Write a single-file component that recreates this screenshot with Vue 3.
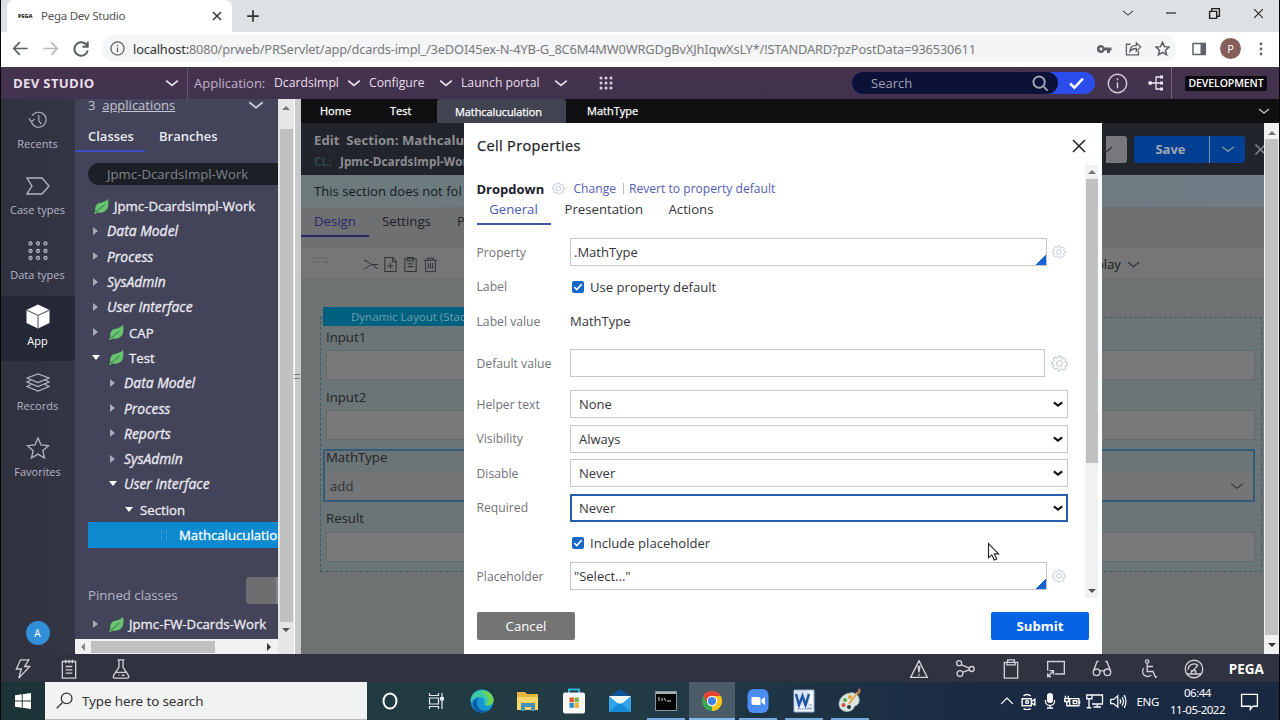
<template>
  <div class="screen">
    <header class="tabstrip">
      <div class="browser-tab">
        <span class="favicon">PEGA</span>
        <span class="tab-title">Pega Dev Studio</span>
        <Icon name="close" :size="12" :sw="3" />
      </div>
      <Icon class="new-tab" name="plus" :size="14" :sw="3" />
      <div class="window-buttons">
        <Icon name="chevron" :size="12" :sw="2" />
        <Icon name="minus" :size="12" :sw="2.4" />
        <Icon name="restore" :size="13" :sw="2.6" />
        <Icon name="close" :size="13" :sw="2" />
      </div>
    </header>

    <div class="address-row">
      <Icon name="back" :size="17" :sw="2.4" />
      <Icon class="faded" name="forward" :size="17" :sw="2.2" />
      <Icon name="reload" :size="18" :sw="2.6" />
      <div class="omnibox">
        <Icon name="info" :size="15" :sw="2" />
        <span class="url"><b>localhost:</b>8080/prweb/PRServlet/app/dcards-impl_/3eDOI45ex-N-4YB-G_8C6M4MW0WRGDgBvXJhIqwXsLY*/!STANDARD?pzPostData=936530611</span>
        <svg class="key" width="15" height="10" viewBox="0 0 15 10"><path d="M4 1a4 4 0 1 0 3.500 5.400H10V9h3V6.400h1.500V3.500H7.500A4 4 0 0 0 4 1Zm0 2.600a1.400 1.400 0 1 1 0 2.800 1.400 1.400 0 0 1 0-2.800Z" fill="#5f6368" fill-rule="evenodd" /></svg>
        <Icon name="share" :size="17" :sw="1.8" />
        <Icon name="star" :size="15" :sw="2.4" />
      </div>
      <svg class="side-panel" width="14" height="14" viewBox="0 0 14 14"><path d="M1 1.500h12v11H1Z" fill="none" stroke="#5f6368" stroke-width="1.500" /><path d="M8.500 1H14v12H8.500Z" fill="#5f6368" /></svg>
      <span class="profile">P</span>
      <svg width="4" height="14" viewBox="0 0 4 14" fill="#5f6368"><circle cx="2" cy="2" r="1.400" /><circle cx="2" cy="7" r="1.400" /><circle cx="2" cy="12" r="1.400" /></svg>
    </div>

    <nav class="devbar">
      <div class="studio"><span>DEV STUDIO</span><Icon name="chevron" :size="14" :sw="3" /></div>
      <span class="app-label">Application:</span>
      <div class="dev-menu m1"><span>DcardsImpl</span><Icon name="chevron" :size="14" :sw="3" /></div>
      <div class="dev-menu m2"><span>Configure</span><Icon name="chevron" :size="14" :sw="3" /></div>
      <div class="dev-menu m3"><span>Launch portal</span><Icon name="chevron" :size="14" :sw="3" /></div>
      <svg class="launcher" width="14" height="14" viewBox="0 0 14 14" fill="#d9d0dd"><circle v-for="n in 9" :key="n" :cx="2 + ((n - 1) % 3) * 5" :cy="2 + Math.floor((n - 1) / 3) * 5" r="1.500" /></svg>
      <div class="search-pill">
        <div class="search-box"><span>Search</span><Icon name="search" :size="17" :sw="2.8" /></div>
        <Icon name="check" :size="17" :sw="3.6" />
      </div>
      <Icon class="dev-info" name="info" :size="21" :sw="1.6" />
      <svg class="tree-icon" width="16" height="16" viewBox="0 0 16 16" fill="none" stroke="#eee6f0" stroke-width="1.300"><path d="M2 8h12M14 2H8v12h6" /><g fill="#eee6f0" stroke="none"><path d="M12 .5h3v3h-3zM12 6.500h3v3h-3zM12 12.500h3v3h-3z" /><circle cx="2.200" cy="8" r="2" /></g></svg>
      <div class="env"><span>DEVELOPMENT</span></div>
    </nav>

    <div class="workspace">
      <aside class="rail">
        <div v-for="r in rail" :key="r.label" class="rail-item" :class="{ active: r.label === 'App' }">
          <div class="rail-icon">
            <svg v-if="r.label === 'App'" width="24" height="25" viewBox="0 0 24 25"><path d="M12 .5 23.500 6v13L12 24.500.5 19V6Z" fill="#fff" /><path d="M1 6.300l11 5.200 11-5.200M12 11.500V24" fill="none" stroke="#5a5c6c" stroke-width="1.100" /></svg>
            <Icon v-else :name="r.icon" :size="24" :sw="1.3" />
          </div>
          <span>{{ r.label }}</span>
        </div>
        <span class="avatar">A</span>
      </aside>

      <section class="explorer">
        <div class="explorer-body">
          <div class="apps-line"><span>3&nbsp; <u>applications</u></span><Icon name="chevron" :size="16" :sw="3" /></div>
          <div class="explorer-tabs"><span class="on">Classes</span><span>Branches</span></div>
          <div class="class-filter">Jpmc-DcardsImpl-Work</div>
          <div class="tree">
            <div v-for="(n, i) in tree" :key="i" class="node" :class="[n.kind, 'l' + n.level]">
              <span v-if="n.arrow" class="arrow" :class="n.arrow"></span>
              <Leaf v-if="n.leaf" />
              <span v-if="n.kind === 'selected'" class="grip"></span>
              <span class="node-text">{{ n.text }}</span>
            </div>
          </div>
          <div class="pinned"><span>Pinned classes</span><i class="pin-button"></i></div>
          <div class="node plain l1 pinned-node"><span class="arrow right"></span><Leaf /><span class="node-text">Jpmc-FW-Dcards-Work</span></div>
        </div>
        <div class="hscroll"><i class="tri left"></i><i class="hthumb"></i><i class="tri rightward"></i></div>
      </section>
      <div class="vscroll explorer-scroll"><i class="tri up"></i><i class="thumb"></i><i class="tri down"></i></div>
      <div class="splitter"><i></i></div>

      <main class="editor">
        <div class="doc-tabs">
          <span class="t-home">Home</span><span class="t-test">Test</span><span class="t-math on">Mathcaluculation</span><span class="t-type">MathType</span>
          <Icon name="chevron" :size="12" :sw="2.8" />
        </div>
        <div class="editor-row">
          <div class="editor-main">
            <div class="rule-header">
              <div class="rule-title"><div class="rt1">Edit&nbsp; Section: Mathcalu</div><div class="rt2"><em>CL:</em><span>Jpmc-DcardsImpl-Wor</span></div></div>
              <span class="grey-button"><Icon name="chevron" :size="13" :sw="2.4" /></span>
              <span class="save">Save</span>
              <span class="save-more"><Icon name="chevron" :size="14" :sw="2.2" /></span>
              <Icon class="rule-close" name="close" :size="15" :sw="2.4" />
            </div>
            <div class="notice">This section does not fol</div>
            <div class="rule-tabs"><span class="on">Design</span><span class="rt-settings">Settings</span><span>P</span></div>
            <div class="toolbar">
              <Icon class="dim" name="lines" :size="18" :sw="1.2" />
              <Icon class="tb-cut" name="cut" :size="15" :sw="1.6" />
              <Icon name="newdoc" :size="17" :sw="1.5" />
              <Icon name="paste" :size="17" :sw="1.5" />
              <Icon name="trash" :size="17" :sw="1.4" />
              <span class="display">Display</span>
              <Icon name="chevron" :size="13" :sw="2.4" />
            </div>
            <div class="canvas">
              <div class="layout-box">
                <div class="layout-title">Dynamic Layout (Stac</div>
                <div v-for="f in fields" :key="f.label" class="field" :class="{ chosen: f.value }">
                  <div class="field-label">{{ f.label }}</div>
                  <div class="field-box"><span>{{ f.value }}</span><Icon v-if="f.value" name="chevron" :size="14" :sw="2" /></div>
                </div>
              </div>
            </div>
          </div>
          <div class="vscroll editor-scroll"><i class="tri up"></i><i class="thumb"></i><i class="tri down"></i></div>
        </div>
      </main>

      <div class="modal">
        <div class="modal-head"><span>Cell Properties</span><Icon name="close" :size="18" :sw="2" /></div>
        <div class="modal-mid">
          <div class="modal-body">
            <div class="control-line"><b>Dropdown</b><Gear :size="13" /><a class="change">Change</a><i></i><a>Revert to property default</a></div>
            <div class="modal-tabs"><span class="on">General</span><span class="mt-pres">Presentation</span><span>Actions</span></div>
            <div class="form">
              <div v-for="f in form" :key="f.id" class="form-row" :class="f.id">
                <label>{{ f.label }}</label>
                <div v-if="f.type === 'input'" class="control" :class="{ smart: f.smart }">{{ f.value }}</div>
                <div v-else-if="f.type === 'select'" class="control select" :class="{ focused: f.id === 'required' }"><span>{{ f.value }}</span><Icon name="chevron" :size="10" :sw="5" /></div>
                <div v-else-if="f.type === 'check'" class="check"><span class="tick"><Icon name="check" :size="10" :sw="4" /></span>{{ f.value }}</div>
                <div v-else class="plain-value">{{ f.value }}</div>
                <Gear v-if="f.gear" :size="f.gear" />
              </div>
            </div>
          </div>
          <div class="vscroll modal-scroll"><i class="tri up"></i><i class="thumb"></i><i class="tri down"></i></div>
        </div>
        <div class="modal-foot"><span class="btn cancel">Cancel</span><span class="btn submit">Submit</span></div>
      </div>
      <svg class="cursor" width="13" height="20" viewBox="0 0 13 20"><path d="M1.500 1.500v14.300l3.300-3 2.400 5.300 2.500-1.200-2.400-5h4.300Z" fill="#fff" stroke="#222" stroke-width="1.100" /></svg>
    </div>

    <footer class="pega-bar">
      <Icon v-for="t in tools" :key="t" :class="'p-' + t" :name="t" :size="20" :sw="1.6" />
      <strong>PEGA</strong>
    </footer>

    <div class="taskbar">
      <div class="start"><svg width="16" height="16" viewBox="0 0 16 16" fill="#fff"><path d="M0 2.300 6.800 1.300V7.500H0ZM7.700 1.200 16 0v7.500H7.700ZM0 8.500h6.800v6.200L0 13.700ZM7.700 8.500H16V16l-8.300-1.200Z" /></svg></div>
      <div class="win-search"><Icon name="lens" :size="17" :sw="1.8" /><span>Type here to search</span></div>
      <div class="task"><svg width="16" height="18" viewBox="0 0 16 18"><ellipse cx="8" cy="9" rx="6.500" ry="7.500" fill="none" stroke="#fff" stroke-width="2" /></svg></div>
      <div class="task"><svg width="18" height="18" viewBox="0 0 18 18" fill="none" stroke="#e6ecee" stroke-width="1.200"><path d="M2.500 1v2.500h9V1M2.500 17v-2.500h9V17M2.500 6h9v6h-9ZM15 1v4M15 8v9" /><path d="M13.700 5.500h2.600v2.400h-2.600Z" fill="#e6ecee" /></svg></div>
      <div class="task"><svg width="24" height="26" viewBox="0 0 24 26"><circle cx="12" cy="13" r="11.500" fill="#1597d5" /><path d="M2 8C6 0 20-1 23.500 11c.4 5-3 6.500-6.500 6.500-2 0-3.500-1-2.500-2.500C16 12 13 9 10 9 6 9 3 11 .6 14 .5 12 1 10 2 8Z" fill="#3fc9a4" /><path d="M7 13c-1 6 4 12 12 9-5 4-14 3-16-4C2 13 5 10 10 9c-2 1-3 2-3 4Z" fill="#0b5ca8" /><path d="M12 4c7-2 12 4 11.500 9-1 5-5 4.500-7.500 4.300 4-3 4-9-4-13.300Z" fill="#74d34d" /></svg></div>
      <div class="task"><svg width="22" height="22" viewBox="0 0 22 22"><path d="M0 2h8l2 2h11v15H0Z" fill="#eab63c" /><path d="M0 7h21v13H0Z" fill="#fbd769" /><path d="M4 13h14v8h-4v-4H8v4H4Z" fill="#4690b5" /></svg></div>
      <div class="task"><svg width="22" height="26" viewBox="0 0 22 26"><path d="M6 5V1.500h10V5" fill="none" stroke="#35b2dc" stroke-width="2" /><rect y="4.500" width="22" height="21" rx="2" fill="#f7f7f7" /><path d="M6.500 9.500h4.300v4.800H6.500Z" fill="#dc5232" /><path d="M11.500 9.500h4.300v4.800h-4.300Z" fill="#78b340" /><path d="M6.500 15h4.300v4.800H6.500Z" fill="#2691c8" /><path d="M11.500 15h4.300v4.800h-4.300Z" fill="#f0ad27" /></svg></div>
      <div class="task"><svg width="24" height="24" viewBox="0 0 24 24"><path d="M1 8 12 0l11 8v8H1Z" fill="#0c5498" /><path d="M1 7.500h22V23H1Z" fill="#32a4ea" /><path d="M1 7h22l-11 9Z" fill="#fff" /><path d="M1 23 12 13l11 10Z" fill="#168bd7" /><path d="M3 7h18l-9 8Z" fill="#eef7fd" /></svg></div>
      <div class="task open"><svg width="22" height="20" viewBox="0 0 22 20"><path d="M.5.5h21v19H.5Z" fill="#050505" stroke="#89959a" /><path d="M1 1h20v2H1Z" fill="#aab2b5" /><path d="M3 7h2M3 9h2M7 7v3M9 7l2 3M12 10h4" stroke="#ddd" /></svg></div>
      <div class="task open current"><svg width="22" height="22" viewBox="0 0 22 22"><circle cx="11" cy="11" r="10" fill="#35a853" /><path d="M11 11 2.300 6A10 10 0 0 1 19.700 6Z" fill="#e94335" /><path d="M11 11V6h8.700A10 10 0 0 1 11 21Z" fill="#fbc116" /><path d="m2.300 6 4.400 7.500L11 11Z" fill="#e94335" /><circle cx="11" cy="11" r="5.200" fill="#fff" /><circle cx="11" cy="11" r="4" fill="#3f7fe8" /></svg></div>
      <div class="task open"><svg width="22" height="24" viewBox="0 0 22 24"><rect x=".5" width="21" height="24" rx="6" fill="#4b8cf5" /><path d="M4.500 8h7q2 0 2 2v6h-7q-2 0-2-2ZM14.500 10.500 18 8v8l-3.500-2.500Z" fill="#fff" /></svg></div>
      <div class="task open"><svg width="22" height="24" viewBox="0 0 22 24"><path d="M1 1h20v22H1Z" fill="#f7faff" stroke="#91a9d0" /><path d="M14 16h5M14 19h5M4 20h15" stroke="#7a9acc" /><path d="M1 2h15v15H1Z" fill="#d7e5f8" /><path d="m3 5 3 11 3.500-9 3 9L16 5" fill="none" stroke="#2556a5" stroke-width="2.500" /></svg></div>
      <div class="task open"><svg width="24" height="26" viewBox="0 0 24 26"><path d="M12 5c6-1 10 3 9 9-1 4-4 3-5 5-1 4-6 5-10 4-5-2-6-7-4-11 2-4 5-6 10-7Z" fill="#dce7e4" stroke="#a5b6b3" /><circle cx="7" cy="12" r="2" fill="#5aab45" /><circle cx="12" cy="9" r="2" fill="#e79c35" /><circle cx="5.500" cy="17" r="2" fill="#d44a3c" /><circle cx="11" cy="19" r="2" fill="#263b42" /><path d="m11 16 9-12" stroke="#e2a44d" stroke-width="2" /><path d="m19 5 2-5 2 2-2 5Z" fill="#b47850" /></svg></div>
      <div class="tray">
        <Icon name="caretup" :size="14" :sw="2.2" />
        <Icon name="meet" :size="17" :sw="2" />
        <svg class="mic" width="12" height="16" viewBox="0 0 12 16"><rect x="3" y="0" width="6" height="10" rx="3" fill="#fff" /><path d="M1.500 7v1.500a4.500 4 0 0 0 9 0V7M6 12.500V15M3 15h6" fill="none" stroke="#fff" stroke-width="1.300" /></svg>
        <Icon name="battery" :size="17" :sw="1.9" />
        <Icon name="network" :size="18" :sw="1.7" />
        <Icon name="speaker" :size="17" :sw="1.8" />
        <span class="lang">ENG</span>
        <div class="clock"><div>06:44</div><div>11-05-2022</div></div>
        <Icon name="note" :size="19" :sw="1.7" />
      </div>
    </div>
  </div>
</template>

<script setup>
import { h } from 'vue'

const paths = {
  close: 'M4 4 20 20M20 4 4 20',
  plus: 'M12 2v20M2 12h20',
  minus: 'M2 12h20',
  chevron: 'M2 8l10 8L22 8',
  caretup: 'M2 17 12 7l10 10',
  restore: 'M3 8h13v13H3ZM7 8V3h14v14h-5',
  back: 'M22 12H3M11 3 2.500 12l8.500 9',
  forward: 'M2 12h19M13 3l8.500 9-8.500 9',
  reload: 'M20 7.500A9 9 0 1 0 21 14M21 2v7h-7',
  info: 'M12 1.500a10.500 10.500 0 1 0 0 21 10.500 10.500 0 0 0 0-21ZM12 10.500v7M12 6v2.200',
  share: 'M8 6H2v15h17v-5M7 16c0-6 4-8.500 9-8.500V4l6 6-6 6v-4c-4 0-7 1-9 4Z',
  star: 'M12 2l3 7 7.500.7-5.700 5 1.700 7.300-6.500-3.900L5.500 22l1.700-7.300-5.700-5L9 9Z',
  search: 'M10 2a8 8 0 1 0 0 16 8 8 0 0 0 0-16ZM16 16l6 6',
  lens: 'M15 1.500a7.500 7.500 0 1 0 0 15 7.500 7.500 0 0 0 0-15ZM9.500 14.500 1 23',
  check: 'M3 12l6 6L21 5',
  recent: 'M4 14a9 9 0 1 0 1-7M1 10l3 4 4-3M13 6v7l3 4',
  casetype: 'M1 4h15l7 8-7 8H1l5-8Z',
  data: 'M3 4.500a1.500 1.500 0 1 0 3 0 1.500 1.500 0 1 0-3 0M10.500 4.500a1.500 1.500 0 1 0 3 0 1.500 1.500 0 1 0-3 0M18 4.500a1.500 1.500 0 1 0 3 0 1.500 1.500 0 1 0-3 0M3 12a1.500 1.500 0 1 0 3 0 1.500 1.500 0 1 0-3 0M10.500 12a1.500 1.500 0 1 0 3 0 1.500 1.500 0 1 0-3 0M18 12a1.500 1.500 0 1 0 3 0 1.500 1.500 0 1 0-3 0M3 19a1.500 1.500 0 1 0 3 0 1.500 1.500 0 1 0-3 0M10.500 19a1.500 1.500 0 1 0 3 0 1.500 1.500 0 1 0-3 0M18 19a1.500 1.500 0 1 0 3 0 1.500 1.500 0 1 0-3 0',
  records: 'M1 8l11-4 11 4-11 4.500ZM5 10l-4 2 11 4.500L23 12l-4-2M5 14.500 1 16.500 12 21l11-4.500-4-2',
  lines: 'M1 4h20M1 9h9M13 9h8v4',
  cut: 'M1 5l17 10M1 19 12 12H23M18 15a2 2 0 1 0 4 2M1 5l3 3',
  newdoc: 'M4 2h11l5 5v15H4ZM15 2v6h5M12 10v8M8 14h8',
  paste: 'M4 4h16v18H4ZM8 2h8v5H8ZM8 11h8M8 15h8',
  trash: 'M3 6h18M8 6V3h8v3M5 6v16h14V6M9 10v8M12 10v8M15 10v8',
  bolt: 'M9 1h10l-5 8h6L7 23l3-11H4Z',
  notepad: 'M4 3h16v20H4ZM8 1v4M12 1v4M16 1v4M8 9h8M8 13h8M8 17h8',
  flask: 'M8 1h8M9.500 1v9L3 20q-1 3 2 3h14q3 0 2-3l-6.500-10V1M6 16h12M9 19h1M13 19.500h3',
  warning: 'M12 2 2 22h20ZM12 9v7M12 18v2M11 9h2l-1 7Z',
  nodes: 'M5 2a3 3 0 1 0 0 6 3 3 0 0 0 0-6ZM20 9a3 3 0 1 0 0 6 3 3 0 0 0 0-6ZM6 14a3.500 3.500 0 1 0 0 7 3.500 3.500 0 0 0 0-7ZM8 7l9 4M9 16l8-3',
  clipboard: 'M4 4h16v19H4ZM8 4V1h8v3h1v3H7V4Z',
  cast: 'M2 14V3h20v15H11M2 21l7-7M9 19v-5H4M2 17v4h4',
  glasses: 'M5.500 12a4 4 0 1 0 0 8 4 4 0 0 0 0-8ZM18.500 12a4 4 0 1 0 0 8 4 4 0 0 0 0-8ZM9.500 15q2.500-2 5 0M1.500 15 6 3h2M22.500 15 18 3h-2',
  access: 'M11 1a2 2 0 1 0 0 4 2 2 0 0 0 0-4ZM11 5v10h7l3 7 2-1M11 9h7M7 11a6 6 0 1 0 9 8',
  gauge: 'M12 1.500a10.500 10.500 0 1 0 0 21 10.500 10.500 0 0 0 0-21ZM4 18h16M10 15l7-8M5 13a7 7 0 0 1 12-5M9 14h5v4H9Z',
  meet: 'M3 8h13v10H3ZM16 12l5-3v8l-5-3M5 4q5-4 10 0M5 22q5 3 10 0M8 13a2 2 0 1 0 4 0 2 2 0 1 0-4 0',
  battery: 'M8 8h13v10H8ZM22 11v4M13 11h5v4h-5ZM2 4v4M6 4v4M1 8h6v4H1ZM4 12v6h4',
  network: 'M8 4h14v12H8M15 16v4M10 20h10M1 4h7v5H1ZM4 9v12M1 21h6',
  speaker: 'M1 9h4l6-5v16l-6-5H1ZM14 9q2 3 0 6M17 6q4 6 0 12M20 3q5 9 0 18',
  note: 'M2 3h20v15h-6l-3 4v-4H2Z',
}
const Icon = (p) => h('svg', { viewBox: '0 0 24 24', width: p.size, height: p.size, fill: 'none', stroke: 'currentColor', 'stroke-width': p.sw },
  [h('path', { d: paths[p.name] })])

const gearPath = 'M10 2h4l.7 3 2 .8L19.300 4l2.800 2.800-1.700 2.600.8 2 2.800.6v3l-2.900.7-.8 2 1.600 2.600-2.700 2.600-2.600-1.500-2 .8L14 24h-4l-.7-2.800-2-.8-2.600 1.500L2 19.200l1.600-2.500-.8-2L0 14v-3l2.900-.7.8-2L2 5.800 4.900 3.200 7.400 4.900l2-.8ZM12 8.500a4.500 4.500 0 1 0 0 9 4.500 4.500 0 0 0 0-9Z'
const Gear = (p) => h('svg', { viewBox: '-1 1 26 24', width: p.size, height: p.size, fill: 'none', stroke: '#b3b8cb', 'stroke-width': 1.4 },
  [h('path', { d: gearPath })])
const Leaf = () => h('svg', { viewBox: '0 0 15 15', width: 15, height: 15 }, [
  h('path', { d: 'M14 0Q15.500 8 12 11.500 9 14.500 3.500 13.500L1 15 0 14 1.500 12.500Q0 6.500 5 4 11 3 14 0Z', fill: '#69c26f' }),
  h('path', { d: 'M2 13 10.500 6', stroke: '#33754a', 'stroke-width': 1 }),
])

const rail = [
  { label: 'Recents', icon: 'recent' },
  { label: 'Case types', icon: 'casetype' },
  { label: 'Data types', icon: 'data' },
  { label: 'App' },
  { label: 'Records', icon: 'records' },
  { label: 'Favorites', icon: 'star' },
]
const tree = [
  { text: 'Jpmc-DcardsImpl-Work', level: 0, kind: 'plain', leaf: true },
  { text: 'Data Model', level: 1, kind: 'group', arrow: 'right' },
  { text: 'Process', level: 1, kind: 'group', arrow: 'right' },
  { text: 'SysAdmin', level: 1, kind: 'group', arrow: 'right' },
  { text: 'User Interface', level: 1, kind: 'group', arrow: 'right' },
  { text: 'CAP', level: 1, kind: 'plain', arrow: 'right', leaf: true },
  { text: 'Test', level: 1, kind: 'plain', arrow: 'open', leaf: true },
  { text: 'Data Model', level: 2, kind: 'group', arrow: 'right' },
  { text: 'Process', level: 2, kind: 'group', arrow: 'right' },
  { text: 'Reports', level: 2, kind: 'group', arrow: 'right' },
  { text: 'SysAdmin', level: 2, kind: 'group', arrow: 'right' },
  { text: 'User Interface', level: 2, kind: 'group', arrow: 'open' },
  { text: 'Section', level: 3, kind: 'plain', arrow: 'open' },
  { text: 'Mathcaluculation', level: 4, kind: 'selected' },
]
const fields = [{ label: 'Input1' }, { label: 'Input2' }, { label: 'MathType', value: 'add' }, { label: 'Result' }]
const form = [
  { id: 'property', label: 'Property', type: 'input', value: '.MathType', smart: true, gear: 14 },
  { id: 'label', label: 'Label', type: 'check', value: 'Use property default' },
  { id: 'labelvalue', label: 'Label value', type: 'text', value: 'MathType' },
  { id: 'default', label: 'Default value', type: 'input', value: '', gear: 17 },
  { id: 'helper', label: 'Helper text', type: 'select', value: 'None' },
  { id: 'visibility', label: 'Visibility', type: 'select', value: 'Always' },
  { id: 'disable', label: 'Disable', type: 'select', value: 'Never' },
  { id: 'required', label: 'Required', type: 'select', value: 'Never' },
  { id: 'include', label: '', type: 'check', value: 'Include placeholder' },
  { id: 'placeholder', label: 'Placeholder', type: 'input', value: '"Select..."', smart: true, gear: 14 },
]
const tools = ['bolt', 'notepad', 'flask', 'warning', 'nodes', 'clipboard', 'cast', 'glasses', 'access', 'gauge']
</script>

<style>
html, body { margin: 0; overflow: hidden; background: #000; }
</style>

<style scoped>
* { box-sizing: border-box; }
.screen { width: 1280px; height: 720px; display: flex; flex-direction: column; overflow: hidden; font: 13px/18px "Open Sans", "Noto Sans", sans-serif; white-space: nowrap; border: solid #050505; border-width: 0 1px; background: #050505; }
svg { flex: none; display: block; }

.tabstrip { height: 32px; flex: none; display: flex; align-items: center; background: #dee1e4; color: #333; }
.browser-tab { width: 225px; height: 32px; margin-left: 6px; padding: 0 9px 0 11px; border-radius: 7px 7px 0 0; background: #fff; display: flex; align-items: center; }
.favicon { width: 23px; font-size: 5.5px; font-weight: 800; color: #333; letter-spacing: 0; }
.tab-title { flex: 1; font: 11.5px/18px "Noto Sans", sans-serif; letter-spacing: -0.25px; color: #555; }
.new-tab { margin-left: 14px; }
.window-buttons { margin-left: auto; padding-right: 14px; display: flex; align-items: center; gap: 31px; margin-top: -6px; color: #222; }

.address-row { height: 35px; flex: none; display: flex; align-items: center; background: #fff; padding: 0 16px 2px 11px; color: #5b5e62; }
.faded { margin-left: 13px; margin-right: 13px; color: #b7b9bb; }
.omnibox { width: 1074px; height: 27px; margin-left: 12px; padding: 0 6px 0 8px; border-radius: 13px; background: #f4f5f6; display: flex; align-items: center; gap: 13px; }
.url { flex: 1; margin-left: -5px; color: #77797c; font: 12.85px/20px "Noto Sans", sans-serif; letter-spacing: -0.18px; }
.url b { font-weight: 400; color: #333; }
.side-panel { margin-left: 16px; }
.profile { width: 21px; height: 21px; margin: 0 18px 0 14px; border-radius: 50%; background: #875f5a; color: #fff; font-size: 11px; line-height: 21px; text-align: center; }

.devbar { height: 32px; flex: none; display: flex; align-items: center; background: linear-gradient(#45334c, #43324f); color: #e8dfeb; }
.studio { width: 187px; height: 32px; padding: 0 8px 0 12px; border-right: 1px solid #675572; display: flex; align-items: center; justify-content: space-between; font-size: 13.2px; font-weight: 700; letter-spacing: 0.3px; }
.app-label { width: 80px; margin-left: 6px; color: #bfb2c6; }
.dev-menu { display: flex; align-items: center; justify-content: space-between; font-size: 12.2px; }
.m1 { width: 87px; }
.m2 { width: 84px; margin-left: 8px; }
.m3 { width: 107px; margin-left: 8px; }
.launcher { margin-left: 31px; }
.search-pill { width: 243px; height: 22px; margin-left: 239px; padding-right: 10px; border-radius: 11px; background: #2b4dec; color: #fff; display: flex; align-items: center; justify-content: space-between; }
.search-box { width: 206px; height: 22px; padding: 0 9px 0 19px; border-radius: 11px; background: #0c1138; color: #a1a3b2; display: flex; align-items: center; justify-content: space-between; }
.dev-info { margin-left: 12px; color: #d8cddd; }
.tree-icon { margin-left: 20px; }
.env { height: 32px; margin-left: 7px; padding-left: 13px; border-left: 1px solid #78657f; display: flex; align-items: center; }
.env span { width: 82px; height: 15px; border-radius: 2px; background: #0d0910; color: #fff; font-size: 10.5px; line-height: 15px; font-weight: 600; text-align: center; letter-spacing: -0.1px; }

.workspace { position: relative; height: 555px; flex: none; display: flex; }
.rail { width: 74px; background: linear-gradient(90deg, #30313f, #343645); color: #b4b4c6; display: flex; flex-direction: column; align-items: center; }
.rail-item { width: 74px; height: 65.6px; padding-right: 1px; display: flex; flex-direction: column; align-items: center; font-size: 11px; line-height: 16px; }
.rail-icon { height: 37px; padding: 8px 0 3px; display: flex; align-items: center; }
.rail-item.active { background: #252836; color: #fff; }
.rail-item:first-child svg { width: 20px; height: 20px; }
.avatar { width: 24px; height: 24px; margin-top: 128px; margin-right: 1px; border-radius: 50%; background: #318fd8; color: #fff; font-size: 10px; line-height: 24px; text-align: center; }

.explorer { width: 203px; background: #434459; color: #eceaf3; display: flex; flex-direction: column; }
.explorer-body { height: 540px; overflow: hidden; }
.apps-line { height: 15px; padding: 0 14px 3px 13px; display: flex; align-items: center; justify-content: space-between; font-size: 13px; line-height: 12px; color: #c5c4d2; }
.explorer-tabs { height: 38px; padding-top: 13px; display: flex; font-size: 13px; font-weight: 600; }
.explorer-tabs span { height: 25px; margin-right: 14px; }
.explorer-tabs .on { width: 70px; padding-left: 13px; border-bottom: 2px solid #3c50c4; }
.class-filter { height: 22px; margin: 11px 0 0 13px; padding-left: 19px; border-radius: 11px 0 0 11px; background: #1c2026; color: #81838b; font-size: 13.2px; line-height: 22px; }
.tree { margin-top: 8.5px; }
.node { height: 25.3px; display: flex; align-items: center; font-size: 13.2px; -webkit-text-stroke: 0.3px; }
.group { font-size: 13.9px; font-style: italic; }
.l0 { padding-left: 19px; }
.l1 { padding-left: 18px; }
.l2 { padding-left: 35px; }
.l3 { padding-left: 51px; }
.node svg { margin-right: 5px; }
.arrow + svg { margin-left: 2px; }
.arrow { width: 14px; flex: none; }
.arrow::before { content: ""; display: block; width: 0; height: 0; margin-bottom: 1px; }
.arrow.right::before { border: solid transparent; border-width: 4.500px 0 4.500px 5px; border-left-color: #aaa9b8; }
.arrow.open::before { margin-left: -1px; border: solid transparent; border-width: 5px 4.500px 0; border-top-color: #fff; }
.selected { margin-left: 13px; padding-left: 73px; background: #0c89cf; overflow: hidden; color: #fff; }
.grip { width: 6px; height: 11px; margin-right: 12px; flex: none; border: dotted #4fa9d9; border-width: 0 1px; }
.pinned { height: 27px; margin-top: 29px; padding-left: 13px; display: flex; align-items: center; justify-content: space-between; font-size: 13.2px; color: #b5b4c4; }
.pinned span { padding-top: 9px; }
.pin-button { width: 32px; height: 27px; border-radius: 3px 0 0 3px; border-right: 2px solid #858585; background: #6e6e70; }
.pinned-node { margin-top: 8px; }

.tri { display: block; width: 0; height: 0; flex: none; border: 4px solid transparent; }
.tri.up { border-top: 0; border-bottom-color: #777; }
.tri.down { border-bottom: 0; border-top-color: #555; }
.tri.left { border-left: 0; border-right-color: #888; }
.tri.rightward { border-right: 0; border-left-color: #333; }
.hscroll { height: 15px; padding: 0 7px 0 6px; background: #f1f1f1; display: flex; align-items: center; }
.hthumb { width: 124px; height: 12px; margin: 0 auto 0 6px; background: #c0c0c0; }
.vscroll { flex: none; display: flex; flex-direction: column; align-items: center; background: #f1f1f1; }
.explorer-scroll { width: 16px; padding-top: 7px; background: #e6e6e6; }
.explorer-scroll .thumb { width: 13px; height: 493px; margin: 19px 0 6px; background: #c1c1c1; }
.splitter { width: 7px; background: linear-gradient(90deg, #fff 1px, #c9c9c9 1px); display: flex; align-items: center; }
.splitter i { width: 6px; height: 5px; border: solid #777; border-width: 1px 0; }

.editor { width: 978px; display: flex; flex-direction: column; }
.doc-tabs { height: 24px; flex: none; padding-right: 9px; background: #101012; color: #fff; font-size: 11px; line-height: 24px; -webkit-text-stroke: 0.25px; display: flex; align-items: center; }
.doc-tabs svg { margin-left: auto; color: #bbb; }
.t-home { width: 70px; margin-left: 19px; }
.t-test { width: 47px; }
.t-math { width: 129px; text-align: center; padding: 1px 6px 0 0; border-radius: 3px 3px 0 0; background: #414450; letter-spacing: -0.1px; }
.t-type { margin-left: 21px; }
.editor-row { display: flex; flex: 1; min-height: 0; }
.editor-main { width: 963px; display: flex; flex-direction: column; overflow: hidden; background: #6e7273; }
.rule-header { height: 52px; flex: none; display: flex; align-items: center; background: #22242c; color: #8b8c92; }
.rule-title { width: 805px; height: 52px; padding: 8px 0 0 13px; font-weight: 700; font-size: 13.2px; }
.rt2 { display: flex; margin-top: 4px; font-size: 11.8px; line-height: 16px; }
.rt2 em { width: 26px; font-style: normal; color: #29484e; }
.grey-button { width: 21px; height: 27px; margin-left: auto; border-radius: 0 3px 3px 0; background: #77787c; color: #333; display: flex; align-items: center; }
.grey-button svg { margin-left: -6px; }
.save { width: 75px; height: 27px; margin-left: 7px; padding-right: 2px; border-radius: 3px 0 0 3px; background: #003f91; color: #9fa8b5; font-weight: 700; line-height: 27px; text-align: center; }
.save-more { width: 36px; height: 27px; border-left: 1px solid #8090a5; border-radius: 0 3px 3px 0; background: #003f91; color: #8795aa; display: flex; align-items: center; justify-content: center; }
.rule-close { margin: 0 -4px 0 8px; }
.notice { height: 32px; flex: none; padding-left: 13px; background: linear-gradient(90deg, #6c7a7c, #707d86); color: #17191d; font-size: 13.1px; line-height: 32px; }
.rule-tabs { height: 41px; flex: none; background: #6f7072; color: #202126; font-size: 13.2px; line-height: 28px; display: flex; }
.rule-tabs .on { width: 68px; height: 30px; padding-left: 13px; border-bottom: 2px solid #292967; color: #292967; }
.rt-settings { width: 75px; margin-left: 13px; }
.toolbar { height: 30px; flex: none; padding: 2px 0 0 11px; background: #767677; color: #33343a; display: flex; align-items: center; gap: 3px; }
.dim { color: #5f6061; }
.tb-cut { margin-left: 31px; }
.display { width: 47px; margin-left: 635px; color: #1c1d20; }
.canvas { flex: 1; padding: 39px 2px 0 19px; }
.layout-box { height: 255px; border: 1px dashed #3c5c69; padding: 0 6px 0 2px; background: #6b7476; }
.layout-title { width: 200px; height: 19px; margin-top: -11px; padding-left: 28px; background: #00607f; color: #709fac; font-size: 11.5px; line-height: 19px; }
.field { height: 60.4px; padding: 2px 0 0 3px; color: #232527; }
.field-label { height: 22px; font-size: 13.2px; line-height: 18px; }
.field-box { height: 30px; padding: 0 9px 0 4px; border: 1px solid #68696b; background: #79797a; display: flex; align-items: center; justify-content: space-between; font-size: 13.2px; }
.chosen { height: 53px; margin: 2px 0 6px; padding: 0 0 0 1px; border: 2px solid #355b79; }
.chosen .field-label { height: 21px; line-height: 13px; }
.chosen .field-box { height: 28px; border: 0; background: #747576; color: #303235; }
.chosen + .field .field-label { line-height: 16px; }
.editor-scroll { width: 15px; padding-top: 8px; }
.editor-scroll .thumb { width: 13px; height: 496px; margin: 4px 0 8px; background: #c1c1c1; }
.editor-scroll .tri.down { border-top-color: #333; }

.modal { position: absolute; left: 463px; top: 24px; width: 638px; height: 531px; background: #fff; color: #35363c; display: flex; flex-direction: column; }
.modal-head { height: 42px; flex: none; padding: 4px 14px 0 13px; display: flex; align-items: center; justify-content: space-between; font-size: 14.5px; letter-spacing: 0.35px; -webkit-text-stroke: 0.25px; color: #1d1e2a; }
.modal-mid { height: 433px; display: flex; }
.modal-body { width: 622px; padding: 13px 0 0 12.5px; overflow: hidden; }
.control-line { height: 20px; padding-top: 1px; display: flex; align-items: center; color: #20212b; font-size: 12.1px; }
.control-line b { width: 75px; font-size: 13px; font-weight: 700; }
.control-line a { color: #5560b4; }
.change { margin-left: 9px; }
.control-line i { height: 11px; margin: 0 5px 0 7px; border-left: 1px solid #bbb; }
.modal-tabs { height: 27px; display: flex; font-size: 13.2px; line-height: 23px; }
.modal-tabs .on { width: 74px; height: 27px; text-align: center; color: #4a5bb5; border-bottom: 2px solid #4156a0; }
.mt-pres { width: 104px; margin-left: 14px; }
.form { padding-top: 13px; }
.form-row { display: flex; align-items: center; height: 28px; margin-bottom: 6.600px; }
.form-row label { width: 93.5px; flex: none; padding-top: 1px; color: #72737a; font-size: 12.2px; }
.form-row .control { width: 498px; height: 28px; padding: 0 4px; border: 1px solid #c3c5c9; line-height: 27px; font-size: 13px; }
.property .control, .placeholder .control { width: 477px; margin-right: 5px; padding: 0 3px; }
.default { margin-top: 14px; margin-bottom: 13px; }
.labelvalue { margin-bottom: 0; }
.default .control { width: 475px; margin-right: 6px; }
.placeholder { margin-top: -1px; }
.smart { background: linear-gradient(135deg, transparent 50%, #1463d1 50%) right bottom / 10px 10px no-repeat; }
.form-row .select { padding: 0 4px 0 8px; display: flex; align-items: center; justify-content: space-between; line-height: 26px; }
.select svg { color: #111; }
.form-row .focused { padding: 0 3px 0 7px; border: 2px solid #2460af; }
.check { display: flex; align-items: center; padding-left: 2px; font-size: 13.1px; }
.tick { width: 12px; height: 12px; margin-right: 6px; border-radius: 2px; background: #1669cb; color: #fff; display: flex; align-items: center; justify-content: center; }
.modal-scroll { width: 13px; padding-top: 5px; margin-left: -1px; }
.modal-scroll .thumb { width: 12px; height: 284px; margin: 5px 0 auto; background: #c1c1c1; }
.modal-scroll .tri.down { margin-bottom: 5px; }
.modal-foot { display: flex; justify-content: space-between; padding: 14px 13px 0 13px; }
.btn { width: 98px; height: 28px; border-radius: 2px; color: #fff; line-height: 28px; text-align: center; font-size: 13.2px; }
.cancel { background: #747474; }
.submit { background: #0763e6; font-weight: 700; }
.cursor { position: absolute; left: 986px; top: 443px; }

.pega-bar { height: 28px; flex: none; padding: 2px 0 0 12px; display: flex; align-items: center; background: #31323f; color: #d0d0d7; }
.p-notepad { margin-left: 26px; }
.p-flask { margin-left: 32px; }
.p-warning { margin-left: 778px; }
.p-nodes, .p-clipboard, .p-cast, .p-glasses, .p-access, .p-gauge { margin-left: 25.8px; }
.pega-bar strong { margin-left: 25px; color: #fff; font-weight: 700; font-size: 13.5px; }

.taskbar { height: 38px; flex: none; display: flex; background: linear-gradient(90deg, #203a3d, #223b45 50%, #1b2b43 75%, #1a2942); color: #fff; }
.start { width: 44px; background: #1c3438; display: flex; align-items: center; justify-content: center; }
.win-search { width: 322px; padding-left: 11px; border-bottom: 1px solid #bbb; background: #f1f2f2; color: #333; display: flex; align-items: center; gap: 9px; font: 13.4px/20px "Noto Sans", sans-serif; letter-spacing: -0.1px; }
.task { width: 46px; display: flex; align-items: center; justify-content: center; }
.task.open { background: linear-gradient(#76a9dc, #76a9dc) center bottom / 38px 2px no-repeat; }
.task.current { background: linear-gradient(#83b8eb, #83b8eb) center bottom / 46px 2px no-repeat #4b5c68; }
.tray { margin-left: auto; padding-right: 20px; display: flex; align-items: center; gap: 5.5px; font: 11.5px/17px "Noto Sans", sans-serif; }
.mic { margin: 0 2px; }
.lang { margin: 0 3px 0 4px; letter-spacing: -0.3px; }
.clock { text-align: center; width: 60px; letter-spacing: -0.5px; margin-right: 7px; }
</style>
